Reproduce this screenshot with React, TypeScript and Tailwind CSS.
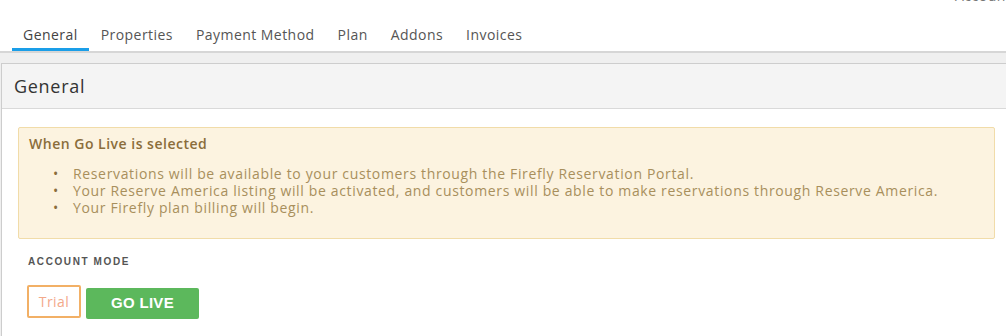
import React, { useState } from 'react';

const tabs = ['General', 'Properties', 'Payment Method', 'Plan', 'Addons', 'Invoices'];

const bullets = [
  'Reservations will be available to your customers through the Firefly Reservation Portal.',
  'Your Reserve America listing will be activated, and customers will be able to make reservations through Reserve America.',
  'Your Firefly plan billing will begin.',
];

const App: React.FC = () => {
  const [active, setActive] = useState('General');
  const [live, setLive] = useState(false);

  return (
    <div className="w-[1006px] h-[336px] overflow-hidden bg-white font-['Open_Sans',sans-serif] text-[#444]">
      {/* clipped header text */}
      <div className="h-[20px] overflow-hidden pl-[955px] whitespace-nowrap">
        <span className="block text-[14px] leading-[14px] -mt-[11px] tracking-[0.5px] text-[#777]">Account</span>
      </div>

      {/* Tabs */}
      <div className="flex pl-[12px] border-b-2 border-[#d6d6d6] h-[33px]">
        {tabs.map(tab => (
          <button
            key={tab}
            onClick={() => setActive(tab)}
            className={`px-[11px] mr-[1px] text-[14px] tracking-[0.45px] leading-[30px] h-[31px] border-b-[3px] ${
              active === tab ? 'border-[#1a9ee8] text-[#444]' : 'border-transparent text-[#555]'
            }`}
          >
            {tab}
          </button>
        ))}
      </div>

      {/* Content area */}
      <div className="bg-[#efefef] pl-[1px] pt-[10px] h-full">
        <div className="border-l border-t border-[#cdcdcd] bg-white h-full">
          <div className="h-[45px] bg-[#f4f4f4] border-b border-[#d9d9d9] flex items-center px-[12px]">
            <h2 className="text-[18px] tracking-[0.7px] text-[#333]">General</h2>
          </div>

          <div className="pl-[16px] pr-[11px] pt-[18px]">
            <div className="border border-[#f1dca9] bg-[#fcf3e0] rounded-[2px] px-[10px] pt-[6px] pb-[22px]">
              <p className="text-[14px] tracking-[0.5px] font-semibold text-[#8a6d3b] leading-[20px]">When Go Live is selected</p>
              <ul className="mt-[11px] pl-[24px] text-[14px] tracking-[0.65px] leading-[17px] text-[#a88f5c]">
                {bullets.map(b => (
                  <li key={b} className="flex">
                    <span className="w-[20px] shrink-0 text-[#8a6d3b]">•</span>
                    <span>{b}</span>
                  </li>
                ))}
              </ul>
            </div>

            <div className="pl-[10px] pt-[15px]">
              <p className="font-['Liberation_Sans',sans-serif] text-[10px] font-bold tracking-[1.6px] text-[#555]">ACCOUNT MODE</p>
              <div className="flex items-start gap-[5px] mt-[16px] -ml-[1px]">
                <button
                  onClick={() => setLive(false)}
                  className="w-[54px] h-[33px] border-2 border-[#f2b066] rounded-[2px] text-[14px] tracking-[0.4px] text-[#f3a98a] bg-white"
                >
                  Trial
                </button>
                <button
                  onClick={() => setLive(true)}
                  className={`mt-[3px] w-[113px] h-[31px] rounded-[2px] font-['Liberation_Sans',sans-serif] text-[15px] font-bold tracking-[0.3px] text-white ${
                    live ? 'bg-[#4cae4c]' : 'bg-[#5cb85c]'
                  }`}
                >
                  GO LIVE
                </button>
              </div>
            </div>
          </div>
        </div>
      </div>
    </div>
  );
};

export default App;
